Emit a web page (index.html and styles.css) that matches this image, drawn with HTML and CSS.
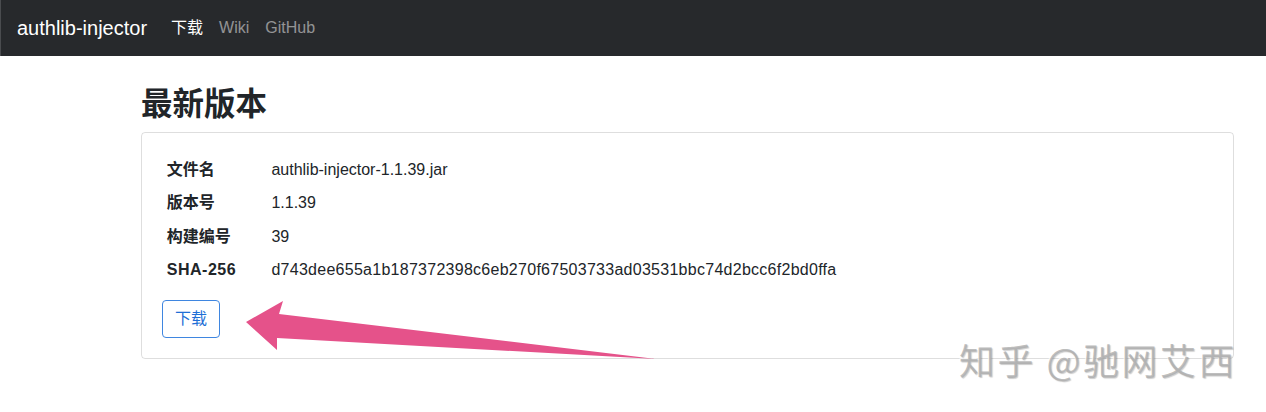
FILE: index.html
```html
<!DOCTYPE html>
<html lang="zh-CN">
<head>
<meta charset="utf-8">
<title>authlib-injector</title>
<link rel="stylesheet" href="styles.css">
</head>
<body>
<nav class="navbar">
  <a class="brand" href="#">authlib-injector</a>
  <ul class="nav">
    <li><a class="nav-link active" href="#">下载</a></li>
    <li><a class="nav-link" href="#">Wiki</a></li>
    <li><a class="nav-link" href="#">GitHub</a></li>
  </ul>
</nav>
<main class="container">
  <h2 class="title">最新版本</h2>
  <div class="card">
    <div class="card-body">
      <table class="info">
        <tr><th>文件名</th><td>authlib-injector-1.1.39.jar</td></tr>
        <tr><th>版本号</th><td>1.1.39</td></tr>
        <tr><th>构建编号</th><td>39</td></tr>
        <tr><th class="wide">SHA-256</th><td class="hash">d743dee655a1b187372398c6eb270f67503733ad03531bbc74d2bcc6f2bd0ffa</td></tr>
      </table>
      <a class="btn" href="#">下载</a>
    </div>
  </div>
</main>
<svg class="arrow" width="1266" height="412" viewBox="0 0 1266 412">
  <polygon points="246,322 283,301 279,314 656,359 277,338 277,350" fill="#e5528a"/>
</svg>
<div class="watermark">知乎 @驰网艾西</div>
</body>
</html>
```
FILE: styles.css
```css
html, body {
  margin: 0;
  padding: 0;
}
body {
  font-family: "Liberation Sans", "Noto Sans CJK SC", sans-serif;
  font-size: 16px;
  line-height: 1.5;
  color: #212529;
  background: #fff;
  width: 1266px;
  height: 412px;
  overflow: hidden;
  position: relative;
}
a { text-decoration: none; }

.navbar {
  display: flex;
  align-items: center;
  height: 56px;
  box-sizing: border-box;
  padding: 8px 16px;
  background: #27292c;
  border-left: 1px solid #4a4c4f;
}
.brand {
  font-size: 20px;
  line-height: 30px;
  padding: 5px 0;
  margin-right: 16px;
  color: #fff;
}
.nav {
  display: flex;
  list-style: none;
  margin: 0;
  padding: 0;
}
.nav-link {
  display: block;
  padding: 8px;
  color: rgba(255,255,255,.5);
}
.nav-link.active { color: #fff; }

.container {
  margin-left: 141px;
  width: 1093px;
}
.title {
  font-size: 31.5px;
  font-weight: 700;
  line-height: 1.2;
  margin: 30px 0 8px;
}
.card {
  border: 1px solid rgba(0,0,0,.13);
  border-radius: 4px;
}
.card-body {
  padding: 20px;
}
.info {
  border-collapse: collapse;
  margin-bottom: 13px;
}
.info th, .info td {
  padding: 4.8px;
  text-align: left;
  vertical-align: top;
}
.info th {
  font-weight: 700;
  width: 95px;
}
.info th.wide {
  letter-spacing: 0.5px;
}
.info td.hash {
  letter-spacing: 0.27px;
}
.btn {
  display: inline-block;
  padding: 6px 12px;
  line-height: 24px;
  border: 1px solid #3f86e0;
  border-radius: 4px;
  color: #1f6fd6;
}

.arrow {
  position: absolute;
  left: 0;
  top: 0;
  pointer-events: none;
}
.watermark {
  position: absolute;
  left: 959px;
  top: 335px;
  font-family: "Noto Sans CJK SC", sans-serif;
  font-size: 36px;
  line-height: 48px;
  letter-spacing: 2.5px;
  white-space: nowrap;
  color: rgba(170,170,170,.75);
  text-shadow: 1px 1px 1px rgba(0,0,0,.2), -1px -1px 0 rgba(255,255,255,.7);
}
```
